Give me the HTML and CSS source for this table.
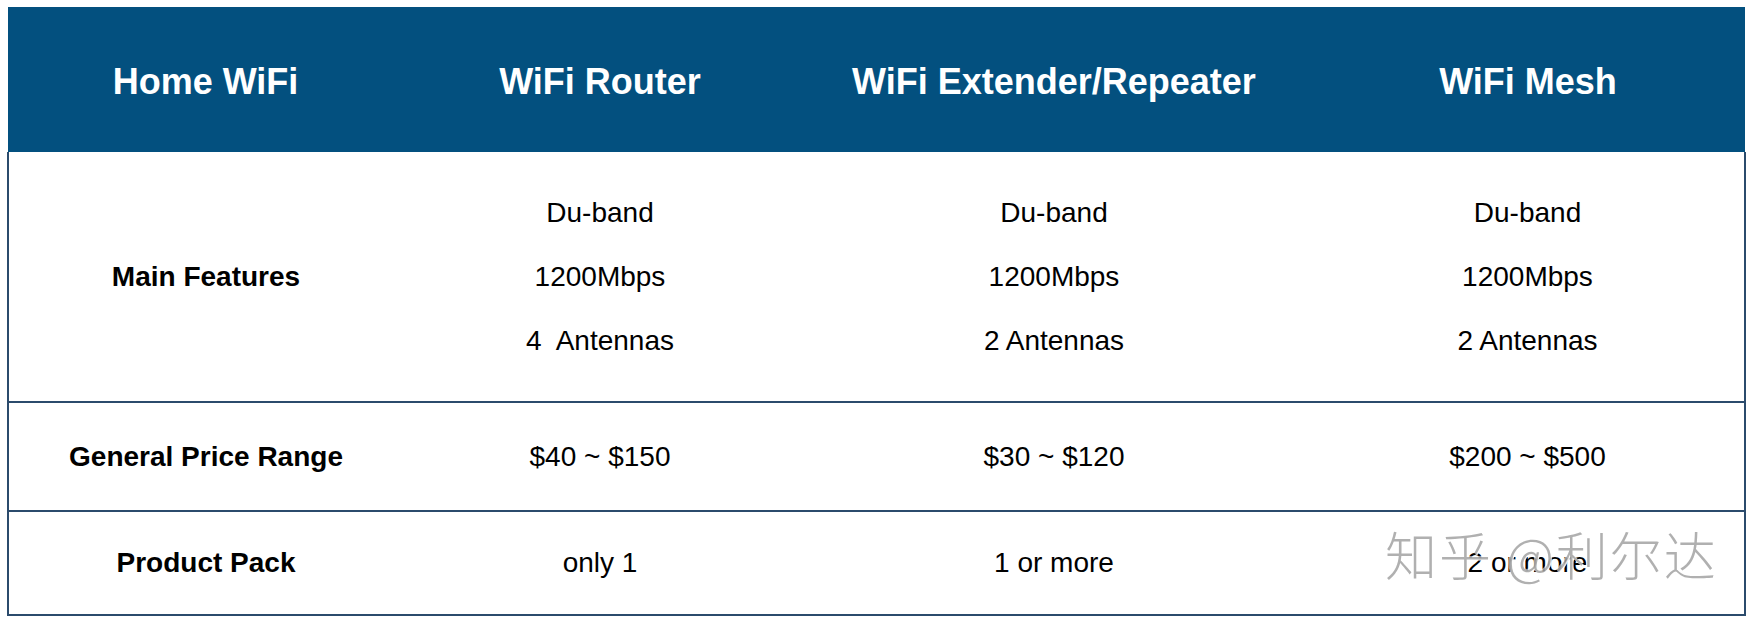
FILE: index.html
```html
<!DOCTYPE html>
<html lang="en">
<head>
<meta charset="utf-8">
<title>Home WiFi comparison</title>
<link rel="stylesheet" href="styles.css">
</head>
<body>
<div class="sheet">
  <div class="table">
    <div class="row head">
      <div class="cell">Home WiFi</div>
      <div class="cell">WiFi Router</div>
      <div class="cell">WiFi Extender/Repeater</div>
      <div class="cell">WiFi Mesh</div>
    </div>
    <div class="body">
      <div class="row features">
        <div class="cell label">Main Features</div>
        <div class="cell stack"><span>Du-band</span><span>1200Mbps</span><span>4&nbsp; Antennas</span></div>
        <div class="cell stack"><span>Du-band</span><span>1200Mbps</span><span>2 Antennas</span></div>
        <div class="cell stack"><span>Du-band</span><span>1200Mbps</span><span>2 Antennas</span></div>
      </div>
      <div class="row price">
        <div class="cell label">General Price Range</div>
        <div class="cell">$40 ~ $150</div>
        <div class="cell">$30 ~ $120</div>
        <div class="cell">$200 ~ $500</div>
      </div>
      <div class="row pack">
        <div class="cell label">Product Pack</div>
        <div class="cell">only 1</div>
        <div class="cell">1 or more</div>
        <div class="cell">2 or more</div>
      </div>
    </div>
    <div class="watermark">知乎 @利尔达</div>
  </div>
</div>
</body>
</html>
```
FILE: styles.css
```css
html, body {
  margin: 0;
  padding: 0;
  background: #ffffff;
}
body {
  font-family: "Liberation Sans", Arial, sans-serif;
  color: #000;
}
.sheet {
  padding: 7px 0 0 7px;
}
.table {
  position: relative;
  width: 1739px;
}
.row {
  display: grid;
  grid-template-columns: 396px 394px 514px 1fr;
}
.cell {
  display: flex;
  align-items: center;
  justify-content: center;
  text-align: center;
}
.head {
  background: #03507f;
  height: 145px;
  box-sizing: border-box;
  padding-top: 4px;
  margin-left: 1px;
  margin-right: 1px;
  grid-template-columns: 395px 394px 514px 1fr;
}
.head .cell {
  color: #ffffff;
  font-weight: bold;
  font-size: 36px;
}
.body {
  border-left: 2px solid #2b4b6c;
  border-right: 2px solid #2b4b6c;
}
.body .row {
  border-bottom: 2px solid #2b4b6c;
  font-size: 28px;
  grid-template-columns: 394px 394px 514px 1fr;
}
.label {
  font-weight: bold;
}
.features {
  height: 249px;
}
.price {
  height: 107px;
}
.pack {
  height: 102px;
}
.stack {
  flex-direction: column;
  gap: 0;
}
.stack span {
  display: block;
  line-height: 64px;
}
.watermark {
  position: absolute;
  left: 1378px;
  top: 512px;
  font-family: "Noto Sans CJK SC", sans-serif;
  font-weight: 300;
  font-size: 52px;
  line-height: 70px;
  color: rgba(150, 150, 150, 0.75);
  letter-spacing: 2px;
  text-shadow: 1px 1px 0 rgba(255, 255, 255, 0.9), -1px -1px 0 rgba(255, 255, 255, 0.6);
  pointer-events: none;
  white-space: nowrap;
}
```
